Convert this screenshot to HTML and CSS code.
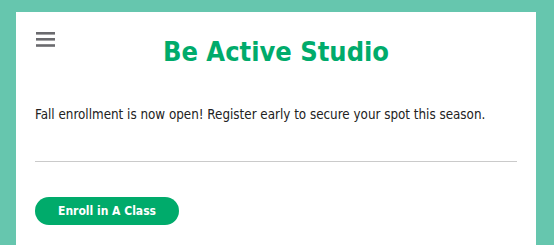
FILE: index.html
```html
<!DOCTYPE html>
<html>
<head>
<meta charset="utf-8">
<link rel="stylesheet" href="styles.css">
</head>
<body>
<div class="card">
  <header class="top">
    <button class="menu" aria-label="Menu">
      <svg width="19" height="16" viewBox="0 0 19 16"><rect x="0" y="0" width="19" height="2.6" fill="#6a6a6e"/><rect x="0" y="6" width="19" height="2.6" fill="#6a6a6e"/><rect x="0" y="12.2" width="19" height="2.6" fill="#6a6a6e"/></svg>
    </button>
    <h1 class="title">Be Active Studio</h1>
  </header>
  <p class="notice">Fall enrollment is now open! Register early to secure your spot this season.</p>
  <hr class="rule">
  <a class="btn" href="#">Enroll in A Class</a>
</div>
</body>
</html>
```
FILE: styles.css
```css
html, body { margin: 0; padding: 0; }
body {
  background: #66c6ae;
  font-family: "DejaVu Sans Condensed", "DejaVu Sans", sans-serif;
  color: #222;
  padding: 12px 18px 0 16px;
  height: 245px;
  box-sizing: border-box;
  overflow: hidden;
}
.card {
  background: #fff;
  height: 100%;
  padding: 0 19px;
  box-sizing: border-box;
}
.top {
  position: relative;
  padding-top: 25px;
  height: 49px;
  box-sizing: border-box;
}
.menu {
  position: absolute;
  left: 1px;
  top: 20px;
  border: 0;
  background: none;
  padding: 0;
  line-height: 0;
}
.title {
  margin: 0;
  text-align: center;
  color: #00ab6b;
  font-size: 27px;
  font-weight: bold;
  line-height: 30px;
}
.notice {
  margin: 0;
  padding-top: 46px;
  font-size: 13.3px;
  line-height: 16px;
}
.rule {
  margin: 38px 0 0;
  border: 0;
  border-top: 1px solid #cacaca;
}
.btn {
  display: inline-flex;
  align-items: center;
  justify-content: center;
  margin-top: 35px;
  width: 144px;
  height: 28px;
  border-radius: 14px;
  background: #00ab6b;
  color: #fff;
  font-weight: bold;
  font-size: 12px;
  text-decoration: none;
}
```
